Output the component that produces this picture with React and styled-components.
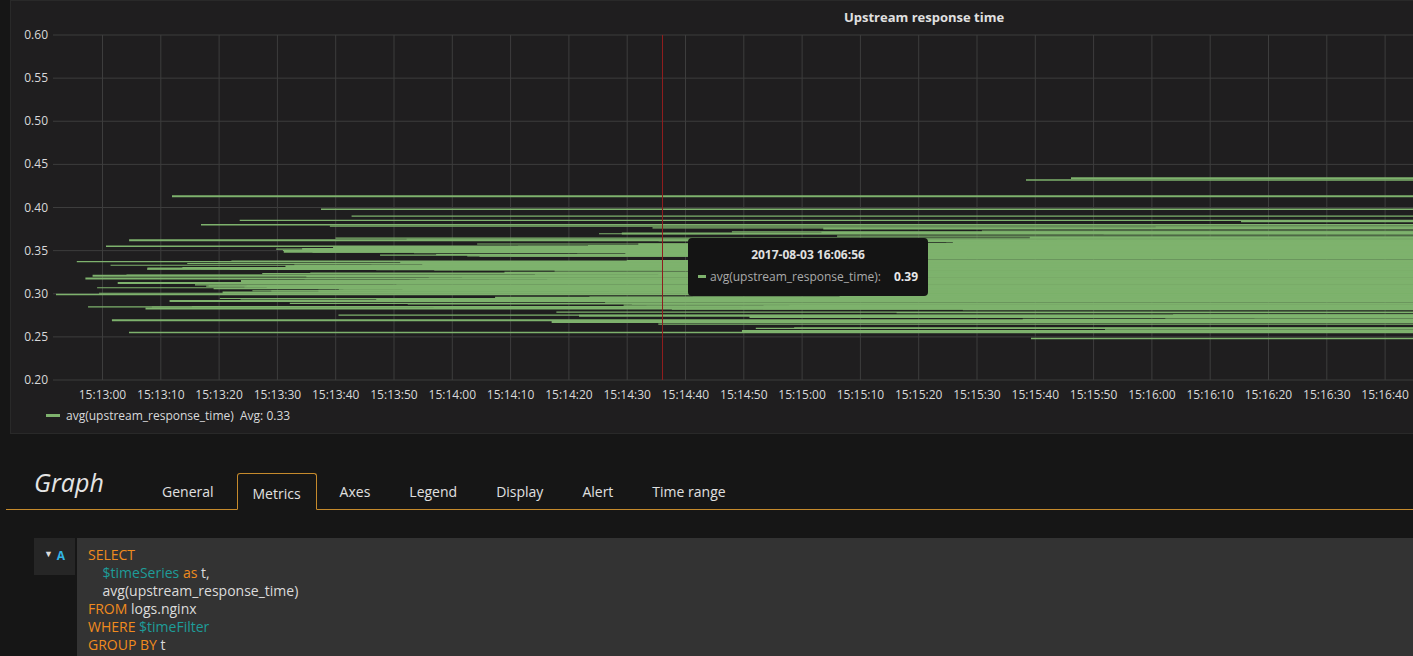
import React from "react";
import styled, { createGlobalStyle } from "styled-components";

const Global = createGlobalStyle`
  body { margin: 0; background: #161616; font-family: "Open Sans", "Noto Sans", sans-serif; color: #d8d9da; overflow: hidden; }
`;

const Page = styled.div`
  width: 1413px; height: 656px; position: relative; overflow: hidden;
  padding-left: 10px; box-sizing: border-box;
`;
const Panel = styled.div`
  width: 1420px; height: 434px; box-sizing: border-box;
  background: #1f1e1f; border: 1px solid #292929; position: relative;
`;
const Legend = styled.div`
  display: flex; align-items: center; gap: 6px; padding-left: 35px; margin-top: -2px;
  font-size: 12px; color: #d8d9da;
`;
const Swatch = styled.span`
  width: 14px; height: 3px; background: #7eb26d; display: inline-block;
`;
const Tooltip = styled.div`
  position: absolute; left: 677px; top: 237px; width: 240px; height: 58px;
  background: #141414; border-radius: 4px; box-sizing: border-box; padding: 8px 10px;
  font-size: 12px;
`;
const TipTitle = styled.div`font-weight: 700; text-align: center; color: #e0e0e0;`;
const TipRow = styled.div`
  display: flex; align-items: center; margin-top: 5px; color: #aaa;
  & > b { margin-left: auto; color: #e8e8e8; }
`;
const Editor = styled.div``;
const TabBar = styled.div`
  display: flex; align-items: flex-end; gap: 7px; height: 75px; margin-left: -4px;
  border-bottom: 1px solid #c58a2c; padding-left: 28px;
`;
const Title = styled.div`
  font-size: 25px; font-style: italic; color: #e4e4e4; width: 105px; padding-bottom: 10px;
`;
const Tab = styled.div`
  height: 37px; padding: 0 15px; display: flex; align-items: center; font-size: 14px;
  color: #e0e0e0; box-sizing: border-box; margin-bottom: -1px;
  border: 1px solid ${p => (p.$active ? "#c58a2c" : "transparent")};
  border-bottom-color: ${p => (p.$active ? "#161616" : "transparent")};
  border-radius: 3px 3px 0 0; background: ${p => (p.$active ? "#161616" : "transparent")};
  padding-top: ${p => (p.$active ? "3px" : "0")};
`;
const QueryRow = styled.div`display: flex; gap: 2px; margin-top: 28px; margin-left: 24px;`;
const RefBox = styled.div`
  width: 41px; height: 37px; background: #262626; color: #33b5e5; font-weight: 700; font-size: 12px;
  display: flex; justify-content: center; padding-top: 9px; box-sizing: border-box; gap: 4px;
`;
const Code = styled.div`
  flex: 1; background: #333333; height: 130px; padding: 8px 11px; box-sizing: border-box;
  font-size: 14px; line-height: 18px; color: #dcdcdc; white-space: pre;
`;
const K = styled.span`color: #f18b1e;`;
const V = styled.span`color: #1e9c99;`;

function rng(seed) {
  let s = seed;
  return () => { s = (s * 16807) % 2147483647; return (s - 1) / 2147483646; };
}
const X0 = 42, Y0 = 34, YH = 345;
const yPix = v => Y0 + ((0.6 - v) / 0.4) * YH;
const lines = (() => {
  const r = rng(777); const out = [];
  for (let i = 0; i < 260; i++) {
    const g = (r() + r() + r() - 1.5) * 0.055 + 0.322;
    let v = Math.min(0.435, Math.max(0.248, g));
    const dist = Math.abs(v - 0.322) / 0.1;
    const start = X0 + 20 + Math.pow(r(), 0.9 - dist * 0.3) * 1200 * (0.6 + dist * 0.8);
    out.push({ y: yPix(v), x: Math.min(start, 1400), w: r() < 0.75 ? 1.2 : 2 });
  }
  [[0.413, 161, 2], [0.38, 190, 1.5], [0.398, 310, 1.5], [0.434, 1060, 2], [0.432, 1015, 1.5], [0.255, 118, 1.5], [0.248, 1020, 1.5], [0.299, 45, 1.5], [0.355, 95, 1.5]]
    .forEach(([v, x, w]) => out.push({ y: yPix(v), x, w }));
  return out;
})();
const xt = ["15:13:00","15:13:10","15:13:20","15:13:30","15:13:40","15:13:50","15:14:00","15:14:10","15:14:20","15:14:30","15:14:40","15:14:50","15:15:00","15:15:10","15:15:20","15:15:30","15:15:40","15:15:50","15:16:00","15:16:10","15:16:20","15:16:30","15:16:40"];

function Chart() {
  const ys = [0.6, 0.55, 0.5, 0.45, 0.4, 0.35, 0.3, 0.25, 0.2];
  return (
    <svg width="1420" height="408" style={{ display: "block" }}>
      <text x="913" y="21" fill="#e0e0e0" fontSize="13" fontWeight="700" textAnchor="middle" fontFamily="Open Sans">Upstream response time</text>
      {ys.map(v => (
        <g key={v}>
          <line x1={X0} x2="1420" y1={yPix(v)} y2={yPix(v)} stroke="#3d3d3d" />
          <text x="37" y={yPix(v) + 4} fill="#d8d9da" fontSize="12" textAnchor="end" fontFamily="Open Sans">{v.toFixed(2)}</text>
        </g>
      ))}
      {xt.map((t, i) => {
        const x = 91.5 + i * 58.3;
        return (
          <g key={t}>
            <line x1={x} x2={x} y1={Y0} y2={Y0 + YH} stroke="#3d3d3d" />
            <text x={x} y="398" fill="#d8d9da" fontSize="12" textAnchor="middle" fontFamily="Open Sans">{t}</text>
          </g>
        );
      })}
      {lines.map((l, i) => (
        <line key={i} x1={l.x} x2="1420" y1={l.y} y2={l.y} stroke="#7eb26d" strokeWidth={l.w} />
      ))}
      <line x1="651.5" x2="651.5" y1={Y0} y2={Y0 + YH} stroke="#8f1d1d" />
    </svg>
  );
}

export default function App() {
  return (
    <Page>
      <Global />
      <Panel>
        <Chart />
        <Legend><Swatch />avg(upstream_response_time)&nbsp; Avg: 0.33</Legend>
        <Tooltip>
          <TipTitle>2017-08-03 16:06:56</TipTitle>
          <TipRow><Swatch style={{ width: 8, marginRight: 4 }} />avg(upstream_response_time):<b>0.39</b></TipRow>
        </Tooltip>
      </Panel>
      <Editor>
        <TabBar>
          <Title>Graph</Title>
          {["General", "Metrics", "Axes", "Legend", "Display", "Alert", "Time range"].map(t => (
            <Tab key={t} $active={t === "Metrics"}>{t}</Tab>
          ))}
        </TabBar>
        <QueryRow>
          <RefBox><span style={{ color: "#ddd", fontSize: 9 }}>▼</span>A</RefBox>
          <Code>
            <K>SELECT</K>{"\n    "}<V>$timeSeries</V> <K>as</K> t,{"\n    "}avg(upstream_response_time){"\n"}<K>FROM</K> logs.nginx{"\n"}<K>WHERE</K> <V>$timeFilter</V>{"\n"}<K>GROUP BY</K> t
          </Code>
        </QueryRow>
      </Editor>
    </Page>
  );
}
